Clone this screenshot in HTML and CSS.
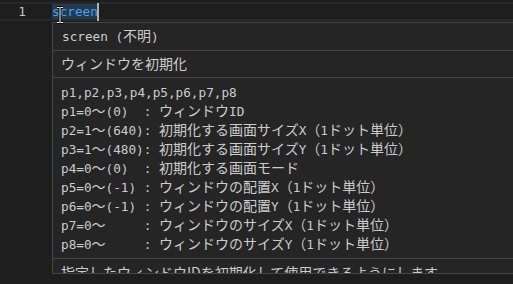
FILE: index.html
```html
<!DOCTYPE html>
<html lang="ja">
<head>
<meta charset="utf-8">
<link rel="stylesheet" href="styles.css">
</head>
<body>
<div class="editor">
  <div class="line">
    <div class="gutter">1</div>
    <div class="code-line"><span class="word">screen</span><span class="caret"></span></div>
    <svg class="ibeam" width="10" height="18" viewBox="0 0 10 18"><path d="M2 1.5h2.5l0.5 0.5 0.5-0.5h2.5M5 2v14M2 16.5h2.5l0.5-0.5 0.5 0.5h2.5" fill="none" stroke="#000" stroke-width="2.6"/><path d="M2 1.5h2.5l0.5 0.5 0.5-0.5h2.5M5 2v14M2 16.5h2.5l0.5-0.5 0.5 0.5h2.5" fill="none" stroke="#fff" stroke-width="1"/></svg>
  </div>
  <div class="widget">
    <div class="header">screen (<span class="j">不明</span>)</div>
    <div class="desc">ウィンドウを初期化</div>
    <div class="code">p1,p2,p3,p4,p5,p6,p7,p8
p1=0<span class="j">～</span>(0)  : <span class="j">ウィンドウ</span>ID
p2=1<span class="j">～</span>(640): <span class="j">初期化する画面サイズ</span>X<span class="j">（</span>1<span class="j">ドット単位）</span>
p3=1<span class="j">～</span>(480): <span class="j">初期化する画面サイズ</span>Y<span class="j">（</span>1<span class="j">ドット単位）</span>
p4=0<span class="j">～</span>(0)  : <span class="j">初期化する画面モード</span>
p5=0<span class="j">～</span>(-1) : <span class="j">ウィンドウの配置</span>X<span class="j">（</span>1<span class="j">ドット単位）</span>
p6=0<span class="j">～</span>(-1) : <span class="j">ウィンドウの配置</span>Y<span class="j">（</span>1<span class="j">ドット単位）</span>
p7=0<span class="j">～</span>     : <span class="j">ウィンドウのサイズ</span>X<span class="j">（</span>1<span class="j">ドット単位）</span>
p8=0<span class="j">～</span>     : <span class="j">ウィンドウのサイズ</span>Y<span class="j">（</span>1<span class="j">ドット単位）</span></div>
    <div class="foot">指定したウィンドウIDを初期化して使用できるようにします</div>
  </div>
</div>
</body>
</html>
```
FILE: styles.css
```css
html, body {
  margin: 0;
  padding: 0;
  background: #1e1e1e;
  width: 513px;
  height: 284px;
  overflow: hidden;
}
.editor {
  position: relative;
  padding-top: 2px;
  font-family: "DejaVu Sans Mono", "Noto Sans CJK JP", monospace;
  font-size: 12.7px;
  color: #cccccc;
}
.line {
  position: relative;
  height: 19px;
  box-sizing: border-box;
  border-top: 2px solid #282828;
  border-bottom: 2px solid #282828;
  display: flex;
  align-items: center;
}
.gutter {
  width: 26px;
  text-align: right;
  color: #c6c6c6;
  font-size: 12.7px;
  line-height: 15px;
}
.code-line {
  margin-left: 26px;
  display: flex;
  align-items: center;
  height: 15px;
}
.word {
  background: #223a52;
  color: #4f9fe3;
  line-height: 15px;
  height: 15px;
}
.caret {
  width: 2px;
  height: 18px;
  background: #aeafad;
  margin-left: -1px;
}
.ibeam {
  position: absolute;
  left: 55px;
  top: 2px;
}
.widget {
  margin-left: 52px;
  margin-top: 1px;
  width: 470px;
  height: 252px;
  box-sizing: border-box;
  border: 1px solid #454545;
  background: #252526;
  overflow: hidden;
}
.header {
  height: 27px;
  line-height: 27px;
  padding-left: 9px;
  border-bottom: 1px solid #454545;
  white-space: pre;
}
.j {
  font-family: "Noto Sans CJK JP", sans-serif;
  font-size: 14px;
  line-height: 1;
}
.desc {
  height: 26px;
  line-height: 25px;
  padding-left: 8px;
  border-bottom: 1px solid #454545;
  font-family: "Noto Sans CJK JP", sans-serif;
  font-size: 14px;
}
.code {
  white-space: pre;
  padding: 5px 0 4px 8px;
  line-height: 19px;
  height: 171px;
  overflow: hidden;
  border-bottom: 1px solid #454545;
}
.foot {
  height: 26px;
  line-height: 26px;
  padding-left: 8px;
  font-family: "Noto Sans CJK JP", sans-serif;
  font-size: 14px;
  white-space: nowrap;
}
```
